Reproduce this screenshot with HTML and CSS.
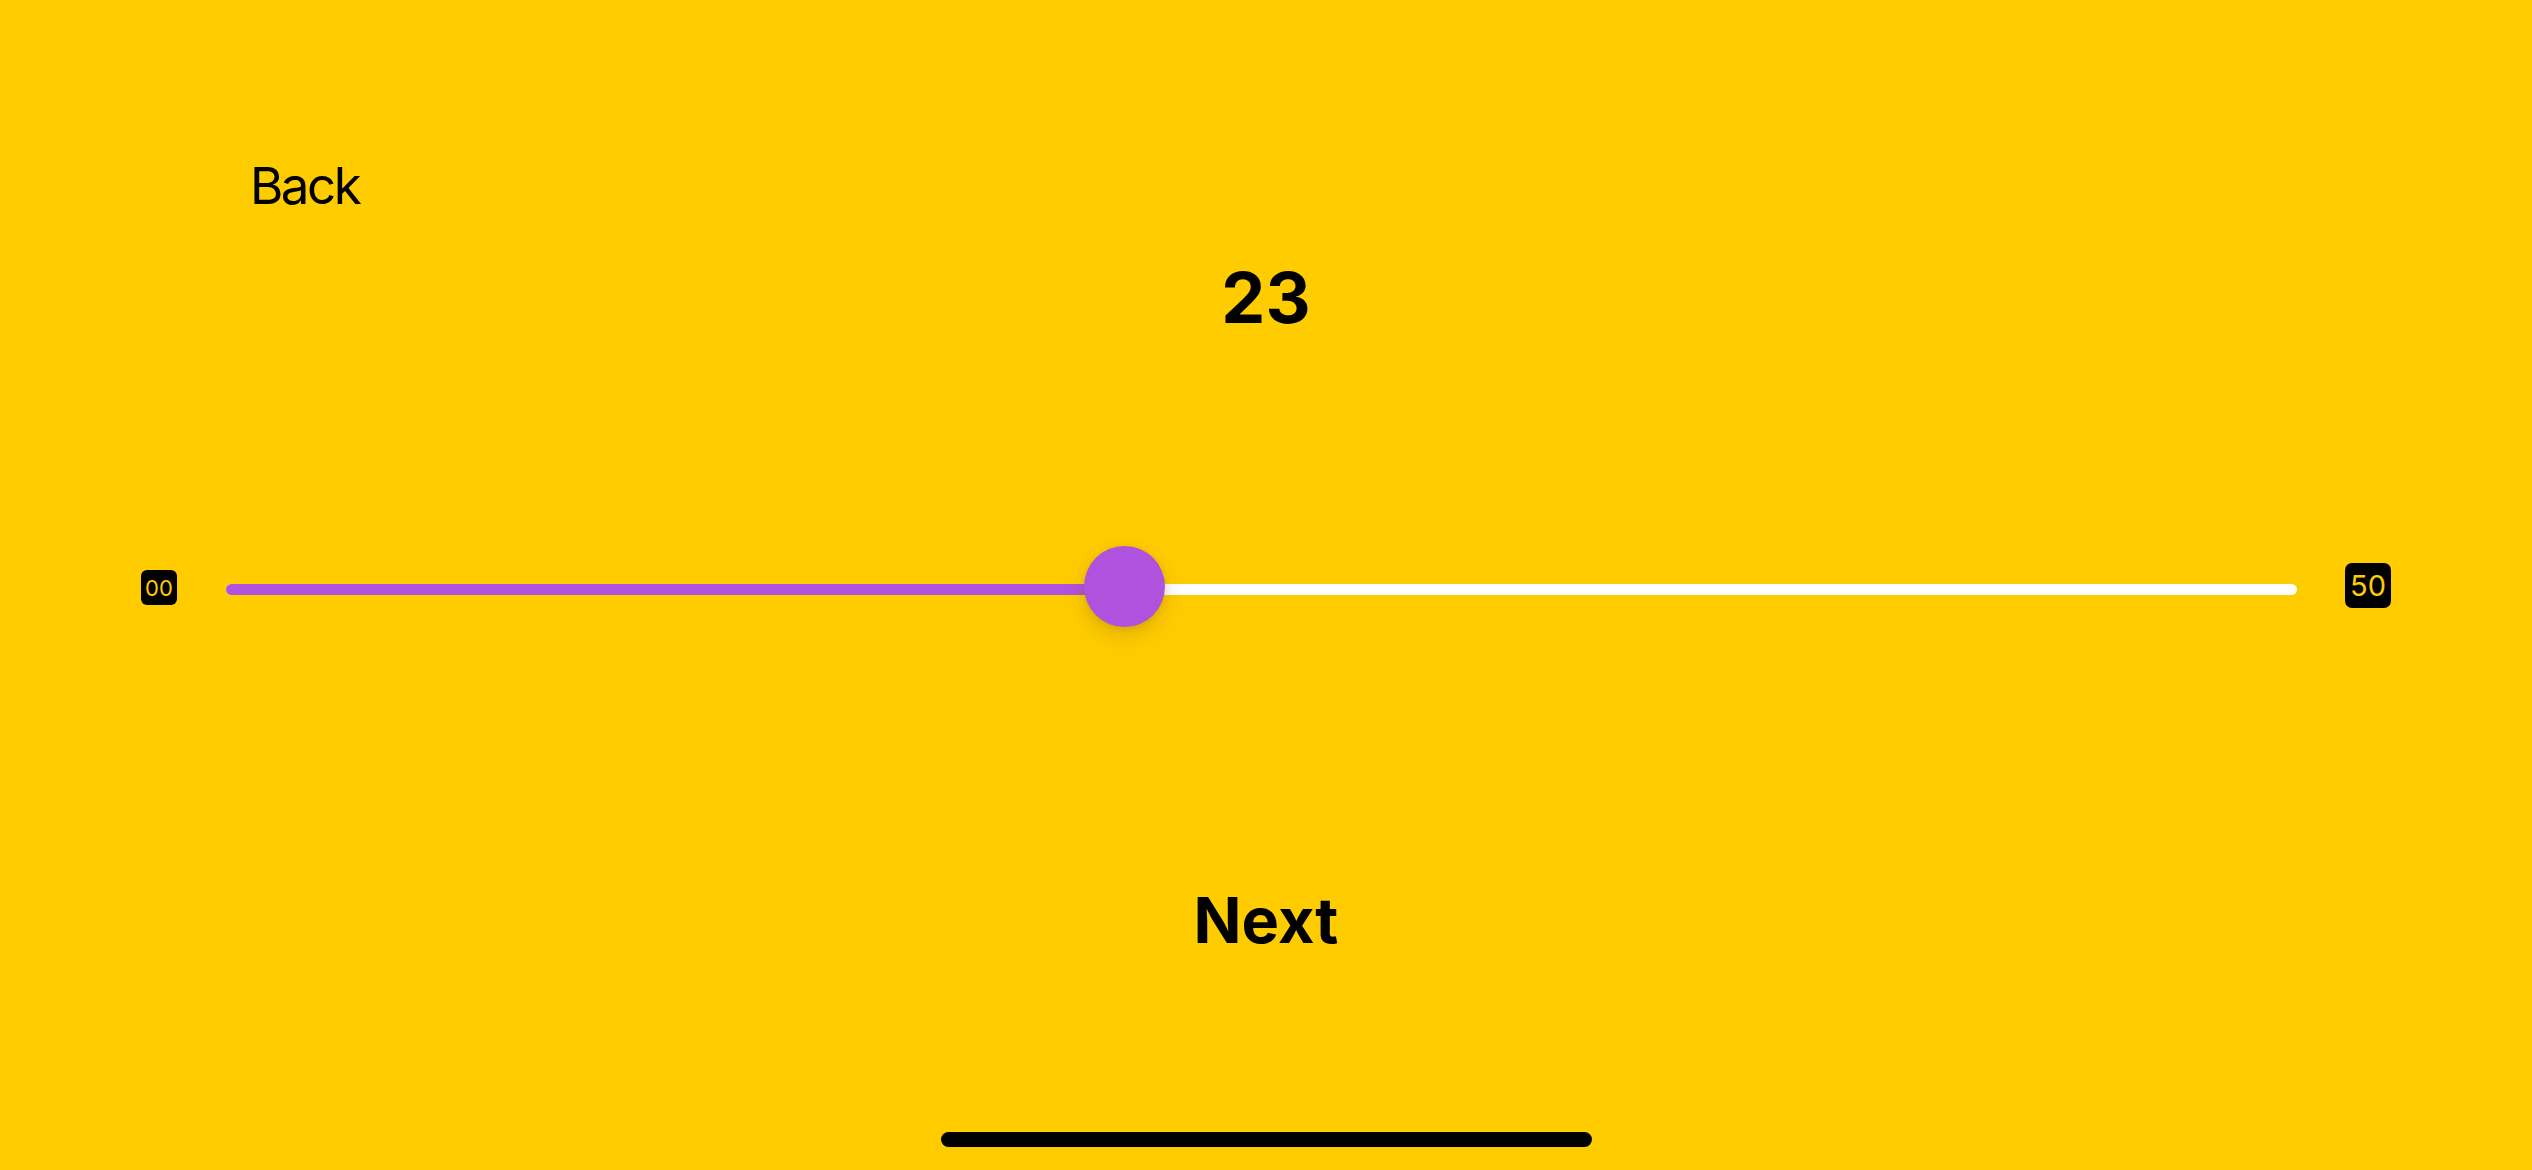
FILE: index.html
```html
<!DOCTYPE html>
<html lang="en">
<head>
<meta charset="utf-8">
<title>Slider</title>
<link rel="stylesheet" href="styles.css">
</head>
<body>
<div class="screen">
  <div class="top-bar"><span class="back">Back</span></div>
  <div class="value">23</div>
  <div class="slider-row">
    <div class="badge badge-min">00</div>
    <div class="track">
      <div class="fill"></div>
      <div class="thumb"></div>
    </div>
    <div class="badge badge-max">50</div>
  </div>
  <div class="next">Next</div>
  <div class="home-indicator"></div>
</div>
</body>
</html>
```
FILE: styles.css
```css
html, body {
  margin: 0;
  padding: 0;
}
body {
  background: #FFCC00;
  font-family: Inter, "Liberation Sans", sans-serif;
  color: #000;
}
.screen {
  width: 2532px;
  height: 1170px;
  background: #FFCC00;
  display: flex;
  flex-direction: column;
  overflow: hidden;
}
.top-bar {
  padding-top: 161px;
  padding-left: 250px;
  height: 50px;
}
.back {
  font-size: 51px;
  line-height: 50px;
  font-weight: 400;
  letter-spacing: -2.5px;
}
.value {
  margin-top: 52px;
  text-align: center;
  font-size: 70px;
  line-height: 70px;
  font-weight: 700;
}
.slider-row {
  margin-top: 213px;
  height: 81px;
  padding: 0 141px;
  display: flex;
  align-items: center;
  gap: 48px;
}
.badge {
  background: #000;
  color: #FFCC00;
  display: flex;
  align-items: center;
  justify-content: center;
  flex-shrink: 0;
}
.badge-min {
  width: 36px;
  height: 35px;
  border-radius: 6px;
  font-size: 22px;
  margin-right: 1px;
  margin-top: 2px;
}
.badge-max {
  width: 46px;
  height: 45px;
  border-radius: 7px;
  font-size: 29px;
  margin-top: -2px;
}
.track {
  flex: 1;
  height: 11px;
  margin-top: 6px;
  border-radius: 6px;
  background: #fff;
  position: relative;
}
.fill {
  width: 899px;
  height: 100%;
  border-radius: 6px;
  background: #AF52DE;
}
.thumb {
  position: absolute;
  left: 858px;
  top: -38px;
  width: 81px;
  height: 81px;
  border-radius: 50%;
  background: #AF52DE;
  box-shadow: 0 8px 22px rgba(120, 80, 0, 0.22), 0 2px 6px rgba(120, 80, 0, 0.12);
}
.next {
  margin-top: 262px;
  text-align: center;
  font-size: 63px;
  line-height: 63px;
  font-weight: 700;
}
.home-indicator {
  margin-top: 180px;
  align-self: center;
  width: 651px;
  height: 15px;
  border-radius: 8px;
  background: #000;
}
```
